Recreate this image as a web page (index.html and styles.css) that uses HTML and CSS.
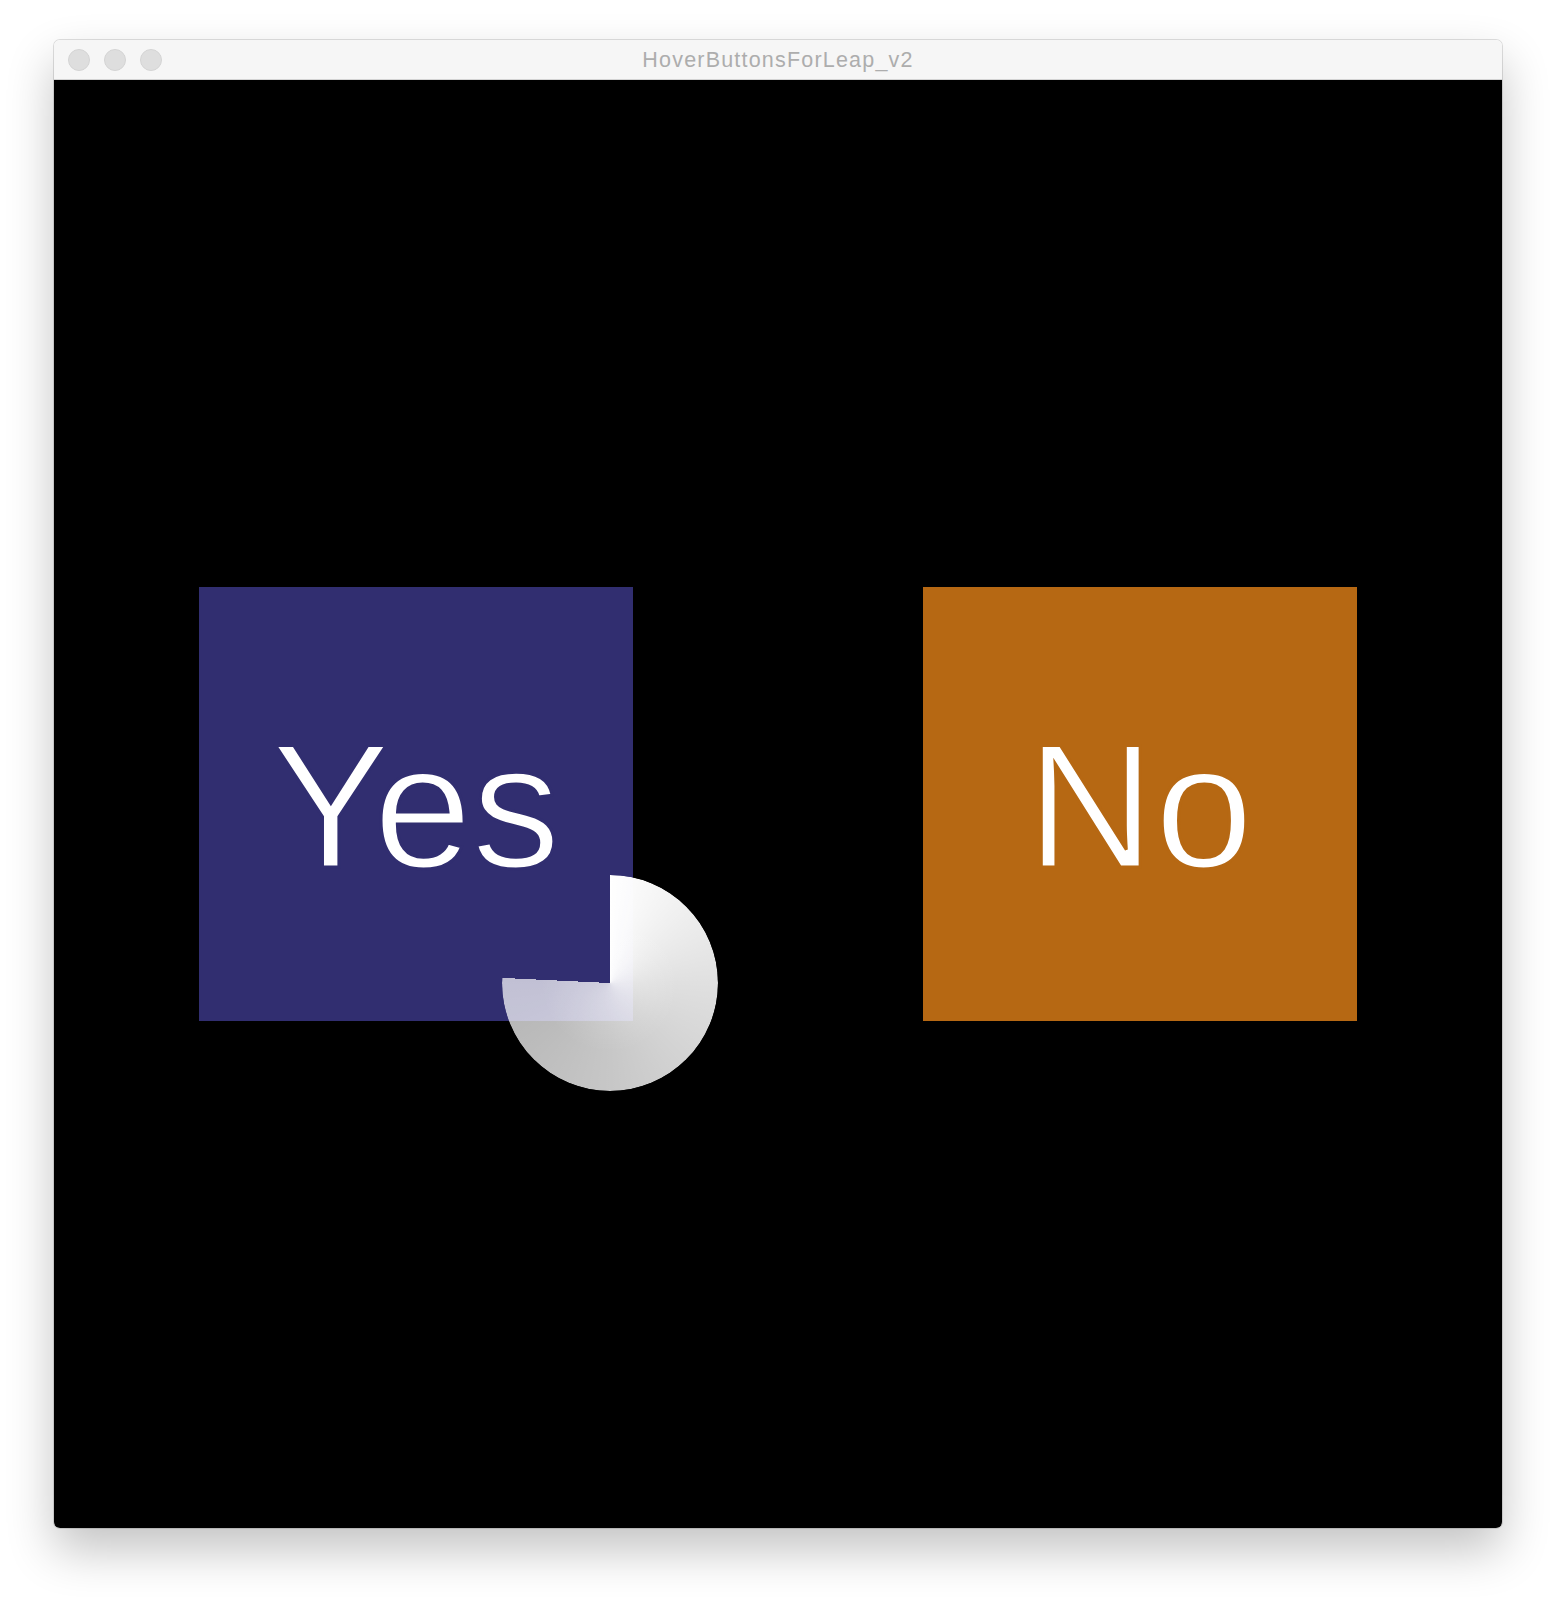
FILE: index.html
```html
<!DOCTYPE html>
<html lang="en">
<head>
    <meta charset="UTF-8">
    <meta name="viewport" content="width=device-width, initial-scale=1.0">
    <title>HoverButtonsForLeap_v2</title>
    <link rel="stylesheet" href="styles.css">
</head>
<body>
    <div class="desktop">
        <div class="window">
            <div class="titlebar">
                <div class="lights">
                    <span class="light"></span>
                    <span class="light"></span>
                    <span class="light"></span>
                </div>
                <div class="title">HoverButtonsForLeap_v2</div>
            </div>
            <div class="sketch">
                <div class="btn btn-yes">Yes</div>
                <div class="btn btn-no">No</div>
                <!-- hover timer, fills clockwise from 12 o'clock -->
                <span class="cursor"></span>
            </div>
        </div>
    </div>
</body>
</html>
```

FILE: styles.css
```css
body{
    margin: 0;
    background: #fff;
    font-family: "Liberation Sans", Arial, sans-serif;
}
.desktop{
    padding: 40px 0 69px 54px;
}
.window{
    width: 1448px;
    border-radius: 6px;
    overflow: hidden;
    box-shadow: 0 22px 48px rgba(0,0,0,0.24), 0 0 0 1px rgba(0,0,0,0.12);
}
.titlebar{
    position: relative;
    height: 39px;
    background: #f6f6f6;
    border-bottom: 1px solid #d3d3d3;
    display: flex;
    align-items: center;
    justify-content: center;
}
.lights{
    position: absolute;
    left: 14px;
    top: 9px;
    display: flex;
    gap: 14px;
}
.light{
    display: block;
    width: 20px;
    height: 20px;
    border-radius: 50%;
    background: #dedede;
    border: 1px solid #d4d4d4;
}
.title{
    font-size: 21.5px;
    letter-spacing: 1.2px;
    color: #adadad;
    padding-top: 1px;
}
.sketch{
    position: relative;
    height: 1448px;
    background: #000;
    display: flex;
    align-items: center;
    justify-content: center;
    gap: 290px;
}
.btn{
    width: 434px;
    height: 434px;
    display: flex;
    align-items: center;
    justify-content: center;
    color: #fff;
    font-size: 177px;
    line-height: 1;
    padding-top: 4px;
    box-sizing: border-box;
    /* thin the strokes a little, using the button colour */
    -webkit-text-stroke: 3px var(--fill);
    background: var(--fill);
}
.btn-yes{
    --fill: #312e70;
}
.btn-no{
    --fill: #b66813;
}
.cursor{
    position: absolute;
    left: 448px;
    top: 795px;
    width: 216px;
    height: 216px;
    border-radius: 50%;
    background:
        radial-gradient(circle, rgba(255,255,255,0.25) 0, rgba(255,255,255,0) 45%),
        conic-gradient(rgba(255,255,255,1) 0deg, rgba(255,255,255,0.88) 90deg, rgba(255,255,255,0.78) 180deg, rgba(255,255,255,0.7) 273deg);
    -webkit-mask-image: conic-gradient(#000 0deg 272.7deg, transparent 272.7deg);
    mask-image: conic-gradient(#000 0deg 272.7deg, transparent 272.7deg);
}
```
